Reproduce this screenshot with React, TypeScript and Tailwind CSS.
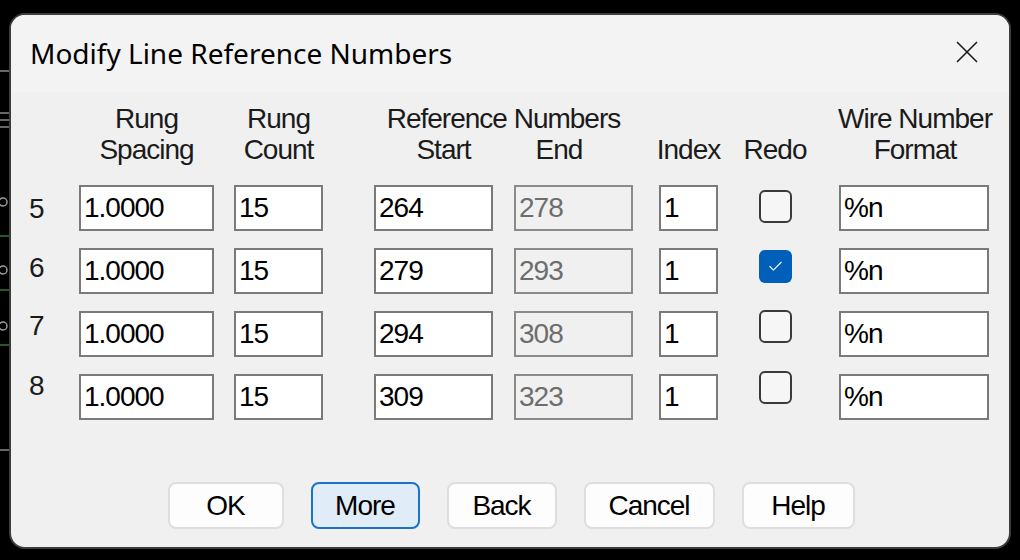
import { Check } from 'lucide-react';

type Row = {
  n: string;
  spacing: string;
  count: string;
  start: string;
  end: string;
  index: string;
  redo: boolean;
  format: string;
};

const ROWS: Row[] = [
  { n: '5', spacing: '1.0000', count: '15', start: '264', end: '278', index: '1', redo: false, format: '%n' },
  { n: '6', spacing: '1.0000', count: '15', start: '279', end: '293', index: '1', redo: true, format: '%n' },
  { n: '7', spacing: '1.0000', count: '15', start: '294', end: '308', index: '1', redo: false, format: '%n' },
  { n: '8', spacing: '1.0000', count: '15', start: '309', end: '323', index: '1', redo: false, format: '%n' },
];

// the row number and the checkbox creep upwards a little from row to row
const ROW_OFFSETS = [
  { label: 'pt-[11px]', box: 'mt-[5px]' },
  { label: 'pt-[7px]', box: 'mt-[2px]' },
  { label: 'pt-[2px]', box: '-mt-[1px]' },
  { label: '-mt-[1px]', box: '-mt-[3px]' },
];

const BUTTONS = [
  { label: 'OK', w: 'w-[116px]', active: false },
  { label: 'More', w: 'w-[109px]', active: true },
  { label: 'Back', w: 'w-[110px]', active: false },
  { label: 'Cancel', w: 'w-[131px]', active: false },
  { label: 'Help', w: 'w-[113px]', active: false },
];

function Field({ value, w, disabled }: { value: string; w: string; disabled?: boolean }) {
  return (
    <div
      className={`flex h-[46px] ${w} items-center border-2 pl-[3px] ${
        disabled ? 'border-[#8a8a8a] bg-[#f0f0f0] text-[#6d6d6d]' : 'border-[#7a7a7a] bg-white text-black'
      }`}
    >
      {value}
    </div>
  );
}

function Box({ checked, className }: { checked: boolean; className: string }) {
  if (checked) {
    return (
      <div className={`flex h-[33px] w-[33px] items-center justify-center rounded-[6px] bg-[#005fb8] ${className}`}>
        <Check className="h-[17px] w-[17px] text-white" strokeWidth={1.5} />
      </div>
    );
  }
  return <div className={`h-[33px] w-[33px] rounded-[6px] border-2 border-[#3a3a3a] bg-[#f6f6f6] ${className}`} />;
}

function Edge() {
  return (
    <svg width="9" height="560" className="shrink-0">
      <line x1="0" y1="71" x2="9" y2="71" stroke="#8a8a8a" strokeWidth="1.5" />
      <line x1="0" y1="113" x2="9" y2="113" stroke="#8a8a8a" strokeWidth="1.5" />
      <line x1="0" y1="120" x2="9" y2="120" stroke="#8a8a8a" strokeWidth="1.5" />
      <line x1="0" y1="127" x2="9" y2="127" stroke="#8a8a8a" strokeWidth="1.5" />
      <circle cx="3" cy="202" r="4" fill="none" stroke="#9a9a9a" strokeWidth="1.5" />
      <line x1="0" y1="236" x2="9" y2="236" stroke="#2f7a2f" strokeWidth="1.5" />
      <circle cx="3" cy="270" r="4" fill="none" stroke="#9a9a9a" strokeWidth="1.5" />
      <line x1="0" y1="290" x2="9" y2="290" stroke="#2f7a2f" strokeWidth="1.5" />
      <circle cx="3" cy="326" r="4" fill="none" stroke="#9a9a9a" strokeWidth="1.5" />
      <line x1="0" y1="345" x2="9" y2="345" stroke="#2f7a2f" strokeWidth="1.5" />
      <line x1="0" y1="450" x2="9" y2="450" stroke="#8a8a8a" strokeWidth="1.5" />
    </svg>
  );
}

export default function App() {
  return (
    <div className="flex h-[560px] w-[1020px] overflow-hidden bg-black">
      <Edge />
      <div className="mt-[13px] flex h-[536px] w-[1002px] flex-col overflow-hidden rounded-[16px] border-2 border-[#3d3d3d] bg-[#f0f0f0]">
        {/* Title bar */}
        <div className="flex h-[77px] shrink-0 items-center justify-between bg-[#f3f3f3] pl-[19px] pr-[31px]">
          <span className="pb-[2px] font-['Noto_Sans',sans-serif] text-[28px] text-black">
            Modify Line Reference Numbers
          </span>
          <svg width="22" height="22" viewBox="0 0 22 22" className="mb-[3px]">
            <path d="M1 1 L21 21 M21 1 L1 21" stroke="#1a1a1a" strokeWidth="1.6" fill="none" />
          </svg>
        </div>

        <div className="flex flex-col font-['Liberation_Sans',Arial,sans-serif] text-[28px] tracking-[-1px] text-[#1b1b1b]">
          {/* Column headers */}
          <div className="flex pt-[11px] leading-[31px]">
            <div className="w-[68px]" />
            <div className="flex w-[135px] flex-col items-center whitespace-nowrap">
              <span>Rung</span>
              <span>Spacing</span>
            </div>
            <div className="ml-[20px] flex w-[89px] flex-col items-center whitespace-nowrap">
              <span>Rung</span>
              <span>Count</span>
            </div>
            <div className="ml-[51px] flex w-[259px] flex-col whitespace-nowrap">
              <span className="text-center">Reference Numbers</span>
              <div className="flex">
                <span className="w-[119px] pl-[20px] text-center">Start</span>
                <span className="ml-[21px] w-[119px] pr-[29px] text-center">End</span>
              </div>
            </div>
            <div className="ml-[26px] flex w-[59px] flex-col items-center whitespace-nowrap">
              <span>&nbsp;</span>
              <span>Index</span>
            </div>
            <div className="ml-[41px] flex w-[32px] flex-col items-center whitespace-nowrap">
              <span>&nbsp;</span>
              <span>Redo</span>
            </div>
            <div className="ml-[49px] flex w-[150px] flex-col items-center whitespace-nowrap">
              <span>Wire Number</span>
              <span>Format</span>
            </div>
          </div>

          {/* Rungs */}
          <div className="mt-[20px] flex flex-col gap-[17px] text-black">
            {ROWS.map((r, i) => (
              <div key={r.n} className="flex h-[46px] items-start">
                <div className={`w-[68px] pl-[18px] leading-[26px] text-[#1b1b1b] ${ROW_OFFSETS[i].label}`}>{r.n}</div>
                <Field value={r.spacing} w="w-[135px]" />
                <div className="ml-[20px]">
                  <Field value={r.count} w="w-[89px]" />
                </div>
                <div className="ml-[51px]">
                  <Field value={r.start} w="w-[119px]" />
                </div>
                <div className="ml-[21px]">
                  <Field value={r.end} w="w-[119px]" disabled />
                </div>
                <div className="ml-[26px]">
                  <Field value={r.index} w="w-[59px]" />
                </div>
                <div className="ml-[40px] flex w-[34px] justify-center">
                  <Box checked={r.redo} className={ROW_OFFSETS[i].box} />
                </div>
                <div className="ml-[47px]">
                  <Field value={r.format} w="w-[150px]" />
                </div>
              </div>
            ))}
          </div>

          {/* Buttons */}
          <div className="mt-[62px] flex justify-center gap-[27px] pl-[2px]">
            {BUTTONS.map((b) => (
              <div
                key={b.label}
                className={`flex h-[47px] ${b.w} items-center justify-center rounded-[8px] ${
                  b.active ? 'border-2 border-[#1a73c8] bg-[#e0ecf8]' : 'border-2 border-[#dedede] bg-[#fdfdfd]'
                } text-black`}
              >
                {b.label}
              </div>
            ))}
          </div>
        </div>
      </div>
    </div>
  );
}
